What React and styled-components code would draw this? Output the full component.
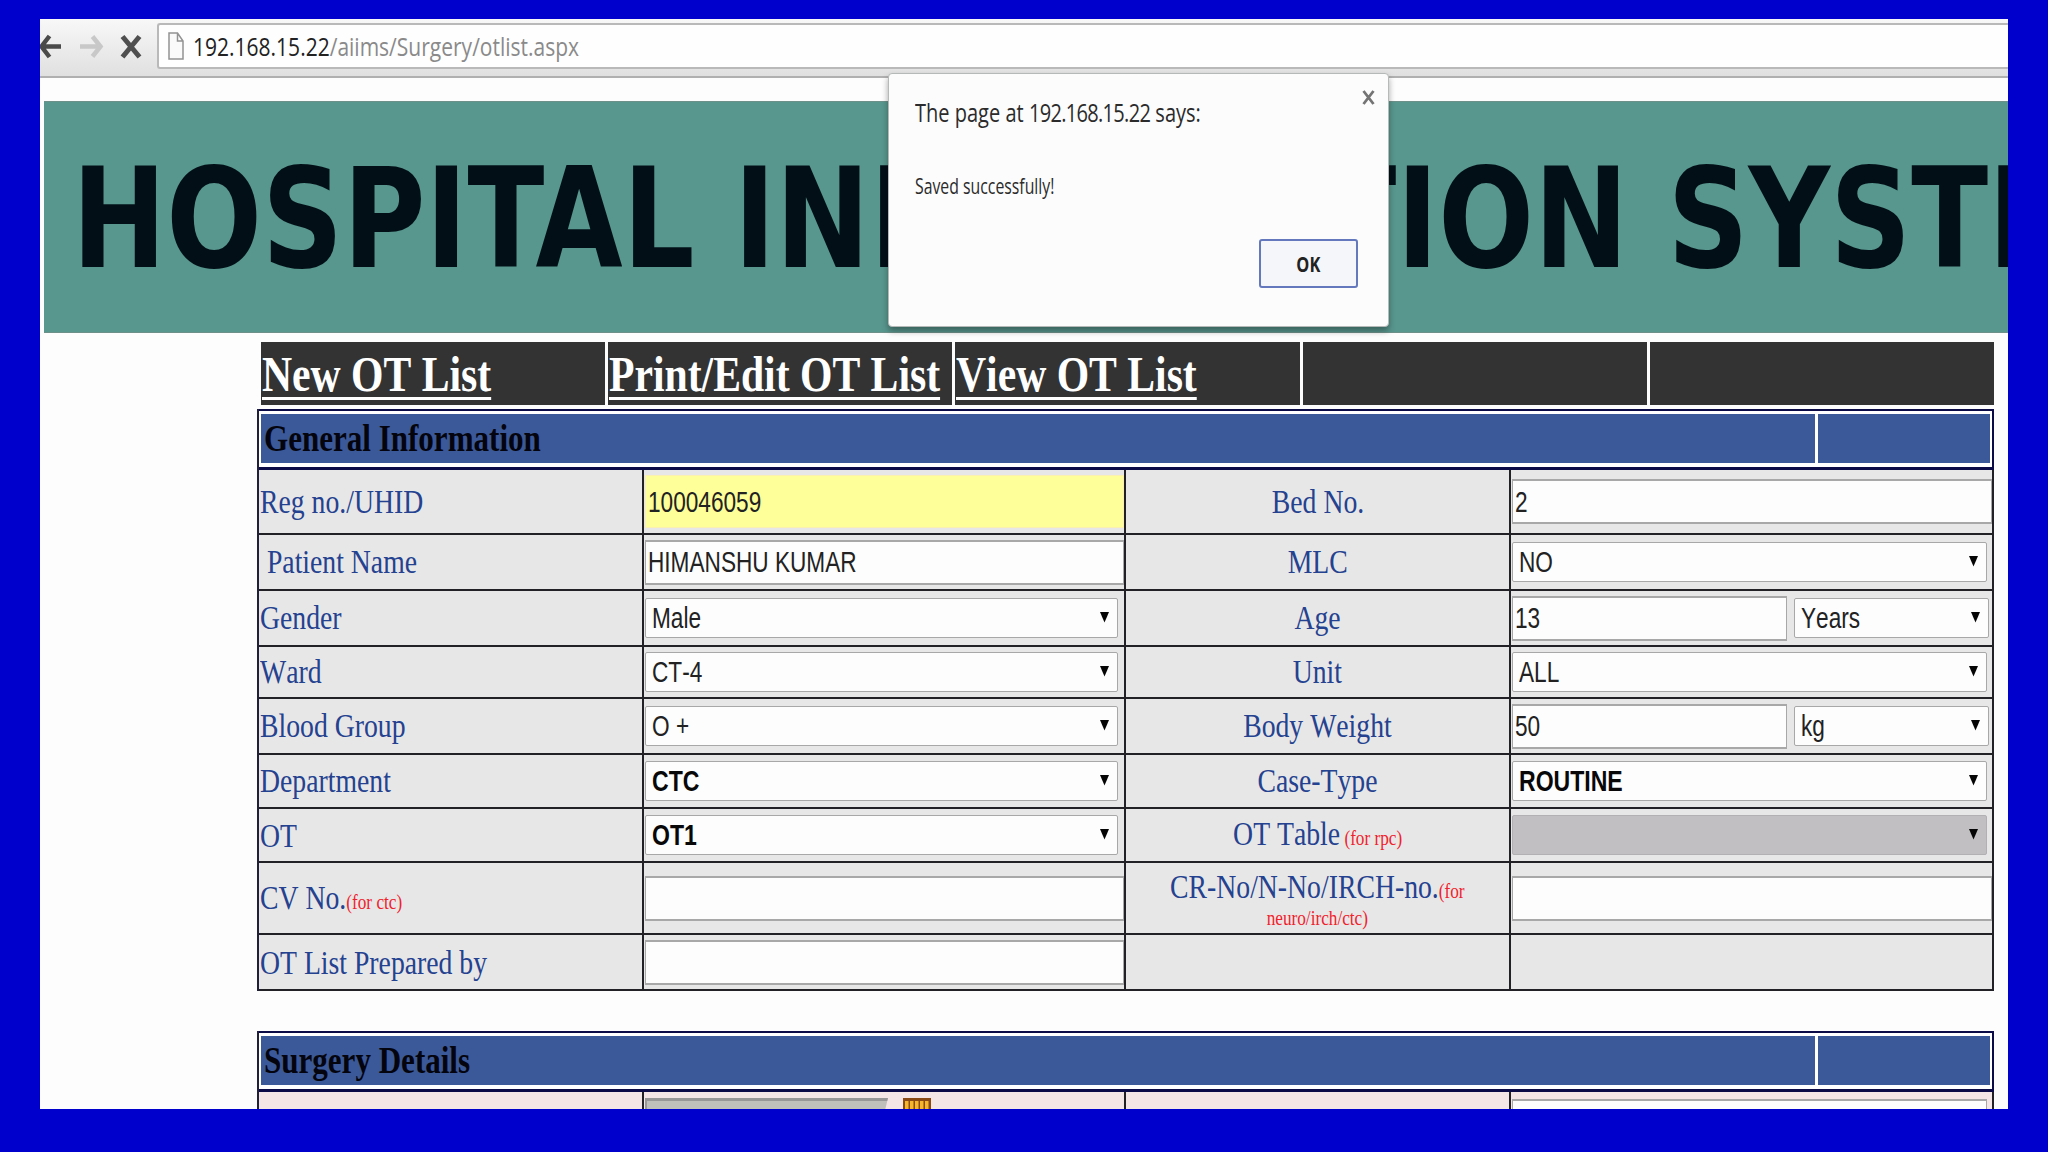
import React from 'react';
import styled, { createGlobalStyle } from 'styled-components';

const GlobalStyle = createGlobalStyle`
  * {
    box-sizing: border-box;
  }

  body {
    margin: 0;
    background-color: #0000cd;
    font-kerning: none;
  }
`

const Slide = styled.div`
  width: 2048px;
  height: 1152px;
  padding: 19px 40px 0;
  background-color: #0000cd;
  overflow: hidden;
`

const Screen = styled.div`
  position: relative;
  width: 1968px;
  height: 1090px;
  background-color: #fdfdfe;
  overflow: hidden;
`

const Squeeze = styled.span`
  display: inline-block;
  white-space: pre;
  transform: scaleX(${props => props.$x});
  transform-origin: ${props => props.$from || 'left'} center;
`

const Toolbar = styled.div`
  display: flex;
  height: 59px;
  padding-top: 4px;
  background: linear-gradient(#f8f8f8, #e0e0e0);
  border-bottom: 2px solid #b0b0b0;
`

const NavButtons = styled.div`
  width: 117px;
  padding-top: 11px;
`

const AddressBar = styled.div`
  flex: 1;
  display: flex;
  align-items: center;
  height: 46px;
  padding-left: 9px;
  background-color: #fefefe;
  border: 2px solid #b9b9b9;
  border-right: none;
  border-radius: 3px 0 0 3px;
  font-family: 'Open Sans', sans-serif;
  font-size: 26px;
  line-height: 30px;
`

const Url = styled.div`
  margin-left: 9px;
  color: #222;

  em {
    font-style: normal;
    color: #8a8a8a;
  }
`

const Banner = styled.div`
  height: 232px;
  margin: 23px 0 0 4px;
  padding: 3px 0 0 28px;
  background-color: #58978e;
  border-top: 1px solid #6d9189;
  border-bottom: 1px solid #6d9189;
  color: #020f17;
  font-family: 'DejaVu Sans', sans-serif;
  font-size: 138.5px;
  font-weight: bold;
  font-kerning: normal;
  line-height: 229px;
`

const Menu = styled.div`
  display: grid;
  grid-template-columns: repeat(5, minmax(0, 1fr));
  gap: 3px;
  width: 1733px;
  margin: 9px 0 4px 221px;
`

const MenuItem = styled.div`
  height: 63px;
  padding-left: 1px;
  background-color: #333334;
  color: #fff;
  font-family: 'Liberation Serif', serif;
  font-size: 51px;
  font-weight: bold;
  line-height: 65px;

  a {
    text-decoration: underline;
    text-decoration-thickness: 3px;
    text-underline-offset: 6px;
    text-decoration-skip-ink: none;
  }
`

const Section = styled.section`
  width: 1737px;
  margin: 0 0 40px 217px;
  border-left: 2px solid #20203a;
`

const SectionHead = styled.div`
  display: grid;
  grid-template-columns: 1554px 172px;
  gap: 3px;
  padding: 3px 2px 4px;
  border: solid #0b0b48;
  border-width: 2px 2px 3px 0;
  background-color: #fff;
`

const HeadCell = styled.div`
  height: 49px;
  padding-left: 3px;
  background-color: #3b5998;
  color: #04040e;
  font-family: 'Liberation Serif', serif;
  font-size: 38px;
  font-weight: bold;
  line-height: 49px;
`

const Row = styled.div`
  display: grid;
  grid-template-columns: 385px 482px 385px 483px;
  height: ${props => props.$height}px;
  background-color: ${props => props.$pink ? '#f4e6e7' : '#e8e7e8'};
`

const Cell = styled.div`
  display: flex;
  align-items: center;
  justify-content: ${props => props.$center ? 'center' : 'flex-start'};
  padding-left: ${props => props.$center ? 0 : 1}px;
  border: solid #222226;
  border-width: 0 2px 2px 0;
  overflow: hidden;
`

const Label = styled(Squeeze)`
  padding-top: ${props => props.$drop || 0}px;
  color: #24428f;
  font-family: 'Liberation Serif', serif;
  font-size: 33px;
  line-height: 38px;
  text-align: ${props => props.$from || 'left'};
`

const Note = styled.span`
  color: #f0222c;
  font-size: 20.5px;
`

const NoteLine = styled(Note)`
  display: block;
  margin: -3px 0 3px;
  line-height: 22px;
`

const TextBox = styled.div`
  display: flex;
  align-items: center;
  width: ${props => props.$width}px;
  height: ${props => props.$yellow ? 53 : 45}px;
  padding-left: 2px;
  background-color: ${props => props.$yellow ? '#ffff99' : '#fdfdfe'};
  border: solid ${props => props.$yellow ? '#fbf0b0' : '#a8a8a8'};
  border-width: ${props => props.$yellow ? '1px' : '2px 1px'};
  color: #222;
  font-family: 'Liberation Sans', sans-serif;
  font-size: 29px;
  line-height: 34px;
`

const Select = styled.div`
  display: flex;
  align-items: center;
  justify-content: space-between;
  width: ${props => props.$width}px;
  height: 40px;
  margin-left: ${props => props.$gap || 0}px;
  padding: 0 8px 0 6px;
  background-color: ${props => props.$disabled ? '#c1bfc1' : '#fdfdfe'};
  border: ${props => props.$disabled ? '1px solid #b2b0b2' : '1px solid #a8a8a8'};
  border-radius: 2px;
  color: ${props => props.$bold ? '#080808' : '#222'};
  font-family: 'Liberation Sans', sans-serif;
  font-size: 29px;
  font-weight: ${props => props.$bold ? 'bold' : 'normal'};
  line-height: 34px;
`

const ArrowSvg = styled.svg`
  margin-bottom: 2px;
`

const DateBox = styled.div`
  align-self: flex-start;
  width: 243px;
  height: 30px;
  margin: 6px 15px 0 0;
  background-color: #bfbfbb;
  border: solid #979797;
  border-width: 3px 0 0 2px;
  clip-path: polygon(0 0, 100% 0, 97% 100%, 0 100%);
`

const CalendarSvg = styled.svg`
  align-self: flex-start;
  margin-top: 6px;
`

const UnitBox = styled(TextBox)`
  align-self: flex-start;
  width: 475px;
  margin-top: 7px;
`

const Dialog = styled.div`
  position: absolute;
  left: 848px;
  top: 54px;
  display: flex;
  flex-direction: column;
  width: 501px;
  height: 254px;
  padding: 23px 30px 0 26px;
  background-color: #fcfcfd;
  border: 1px solid #b5b9b8;
  border-radius: 4px;
  box-shadow: 0 4px 6px rgba(0, 0, 0, 0.35);
  color: #2b2b2b;
  font-family: 'Open Sans', sans-serif;
`

const DialogTitle = styled.div`
  font-size: 26px;
  line-height: 30px;
`

const Host = styled.span`
  letter-spacing: -0.9px;
`

const DialogText = styled.div`
  margin-top: 47px;
  font-size: 21px;
  line-height: 24px;
`

const DialogClose = styled.svg`
  position: absolute;
  right: 13px;
  top: 16px;
`

const OkButton = styled.button`
  align-self: flex-end;
  width: 99px;
  height: 49px;
  margin-top: 41px;
  padding: 0;
  background-color: #f5f6f9;
  border: 2px solid #6478bd;
  border-radius: 3px;
  color: #222;
  font-family: 'Open Sans', sans-serif;
  font-size: 21px;
  font-weight: bold;
`

function Value({ bold, children }) {
  return <Squeeze $x={bold ? 0.795 : 0.78}>{children}</Squeeze>;
}

function Arrow() {
  return (
    <ArrowSvg width="9" height="11" viewBox="0 0 9 11">
      <path d="M0 0h9L4.5 10.500z" fill="#050505" />
    </ArrowSvg>
  );
}

function Dropdown({ value, width = 473, ...rest }) {
  return (
    <Select $width={width} {...rest}>
      <Value bold={rest.$bold}>{value}</Value>
      <Arrow />
    </Select>
  );
}

function Input({ value, width = 479, yellow }) {
  return (
    <TextBox $width={width} $yellow={yellow}>
      <Value>{value}</Value>
    </TextBox>
  );
}

const generalRows = [
  { height: 65, left: 'Reg no./UHID', field: <Input value="100046059" yellow />, right: 'Bed No.', other: <Input value="2" width={480} /> },
  { height: 56, left: ' Patient Name', field: <Input value="HIMANSHU KUMAR" />, right: 'MLC', other: <Dropdown value="NO" width={475} /> },
  {
    height: 56, left: 'Gender', field: <Dropdown value="Male" />, right: 'Age',
    other: <><Input value="13" width={275} /><Dropdown value="Years" width={195} $gap={7} /></>,
  },
  { height: 52, left: 'Ward', field: <Dropdown value="CT-4" />, right: 'Unit', other: <Dropdown value="ALL" width={475} /> },
  {
    height: 56, left: 'Blood Group', field: <Dropdown value="O +" />, right: 'Body Weight',
    other: <><Input value="50" width={275} /><Dropdown value="kg" width={195} $gap={7} /></>,
  },
  { height: 54, left: 'Department', field: <Dropdown value="CTC" $bold />, right: 'Case-Type', other: <Dropdown value="ROUTINE" width={475} $bold /> },
  { height: 54, drop: 2, left: 'OT', field: <Dropdown value="OT1" $bold />, right: <>OT Table<Note> (for rpc)</Note></>, other: <Dropdown width={475} $disabled /> },
  {
    height: 72, drop: 3, left: <>CV No.<Note>(for ctc)</Note></>, field: <Input />,
    right: <>CR-No/N-No/IRCH-no.<Note>(for</Note><NoteLine>neuro/irch/ctc)</NoteLine></>,
    other: <Input width={480} />,
  },
  { height: 56, drop: 2, left: 'OT List Prepared by', field: <Input />, right: '', other: null },
];

function BrowserBar() {
  return (
    <Toolbar>
      <NavButtons>
        <svg width="104" height="26" viewBox="0 0 104 26" fill="none" strokeWidth="4.500">
          <path d="M21 12.500H3M9.500 2L1.500 12.500l8 10.500" stroke="#4a4a4a" />
          <path d="M40 12.500h18M52.500 2.500l8 10-8 10" stroke="#c8c8c8" />
          <path d="M82.500 2.500l17 20.500M99.500 2.500l-17 20.500" stroke="#4f4f4f" strokeWidth="5" />
        </svg>
      </NavButtons>
      <AddressBar>
        <svg width="16" height="28" viewBox="0 0 16 28" fill="#fafafa" stroke="#929292" strokeWidth="1.500">
          <path d="M1 1h8.500L15 9v18H1zM9.500 1v8H15" />
        </svg>
        <Url>
          <Squeeze $x={0.808}>192.168.15.22<em>/aiims/Surgery/otlist.aspx</em></Squeeze>
        </Url>
      </AddressBar>
    </Toolbar>
  );
}

function SectionTitle({ children }) {
  return (
    <SectionHead>
      <HeadCell><Squeeze $x={0.817}>{children}</Squeeze></HeadCell>
      <HeadCell />
    </SectionHead>
  );
}

function CalendarIcon() {
  return (
    <CalendarSvg width="28" height="24" viewBox="0 0 28 24">
      <path d="M0 0h28v24H0z" fill="#8a4a14" />
      <path d="M2 3h3.500v21H2zM7 3h3.500v21H7zM12 3h3.500v21H12zM17 3h3.500v21H17zM22 3h3.500v21H22z" fill="#f5b62c" />
    </CalendarSvg>
  );
}

function Alert() {
  return (
    <Dialog>
      <DialogTitle><Squeeze $x={0.77}>The page at <Host>192.168.15.22</Host> says:</Squeeze></DialogTitle>
      <DialogText><Squeeze $x={0.753}>Saved successfully!</Squeeze></DialogText>
      <OkButton><Squeeze $x={0.78} $from="center">OK</Squeeze></OkButton>
      <DialogClose width="13" height="15" viewBox="0 0 13 15">
        <path d="M1.500 1l10 13M11.500 1l-10 13" stroke="#747474" strokeWidth="2.800" />
      </DialogClose>
    </Dialog>
  );
}

function App() {
  return (
    <Slide>
      <GlobalStyle />

      <Screen>
        <BrowserBar />

        <Banner>
          <Squeeze $x={0.813}>HOSPITAL INFORMATION SYSTEM</Squeeze>
        </Banner>

        <Menu>
          <MenuItem><Squeeze $x={0.817}><a>New OT List</a></Squeeze></MenuItem>
          <MenuItem><Squeeze $x={0.817}><a>Print/Edit OT List</a></Squeeze></MenuItem>
          <MenuItem><Squeeze $x={0.817}><a>View OT List</a></Squeeze></MenuItem>
          <MenuItem />
          <MenuItem />
        </Menu>

        <Section>
          <SectionTitle>General Information</SectionTitle>
          {generalRows.map((row, index) => (
            <Row key={index} $height={row.height}>
              <Cell><Label $x={0.84} $drop={row.drop}>{row.left}</Label></Cell>
              <Cell>{row.field}</Cell>
              <Cell $center><Label $x={0.84} $from="center" $drop={row.drop}>{row.right}</Label></Cell>
              <Cell>{row.other}</Cell>
            </Row>
          ))}
        </Section>

        <Section>
          <SectionTitle>Surgery Details</SectionTitle>
          <Row $height={56} $pink>
            <Cell />
            <Cell><DateBox /><CalendarIcon /></Cell>
            <Cell />
            <Cell><UnitBox /></Cell>
          </Row>
        </Section>

        <Alert />
      </Screen>
    </Slide>
  );
}

export default App;
